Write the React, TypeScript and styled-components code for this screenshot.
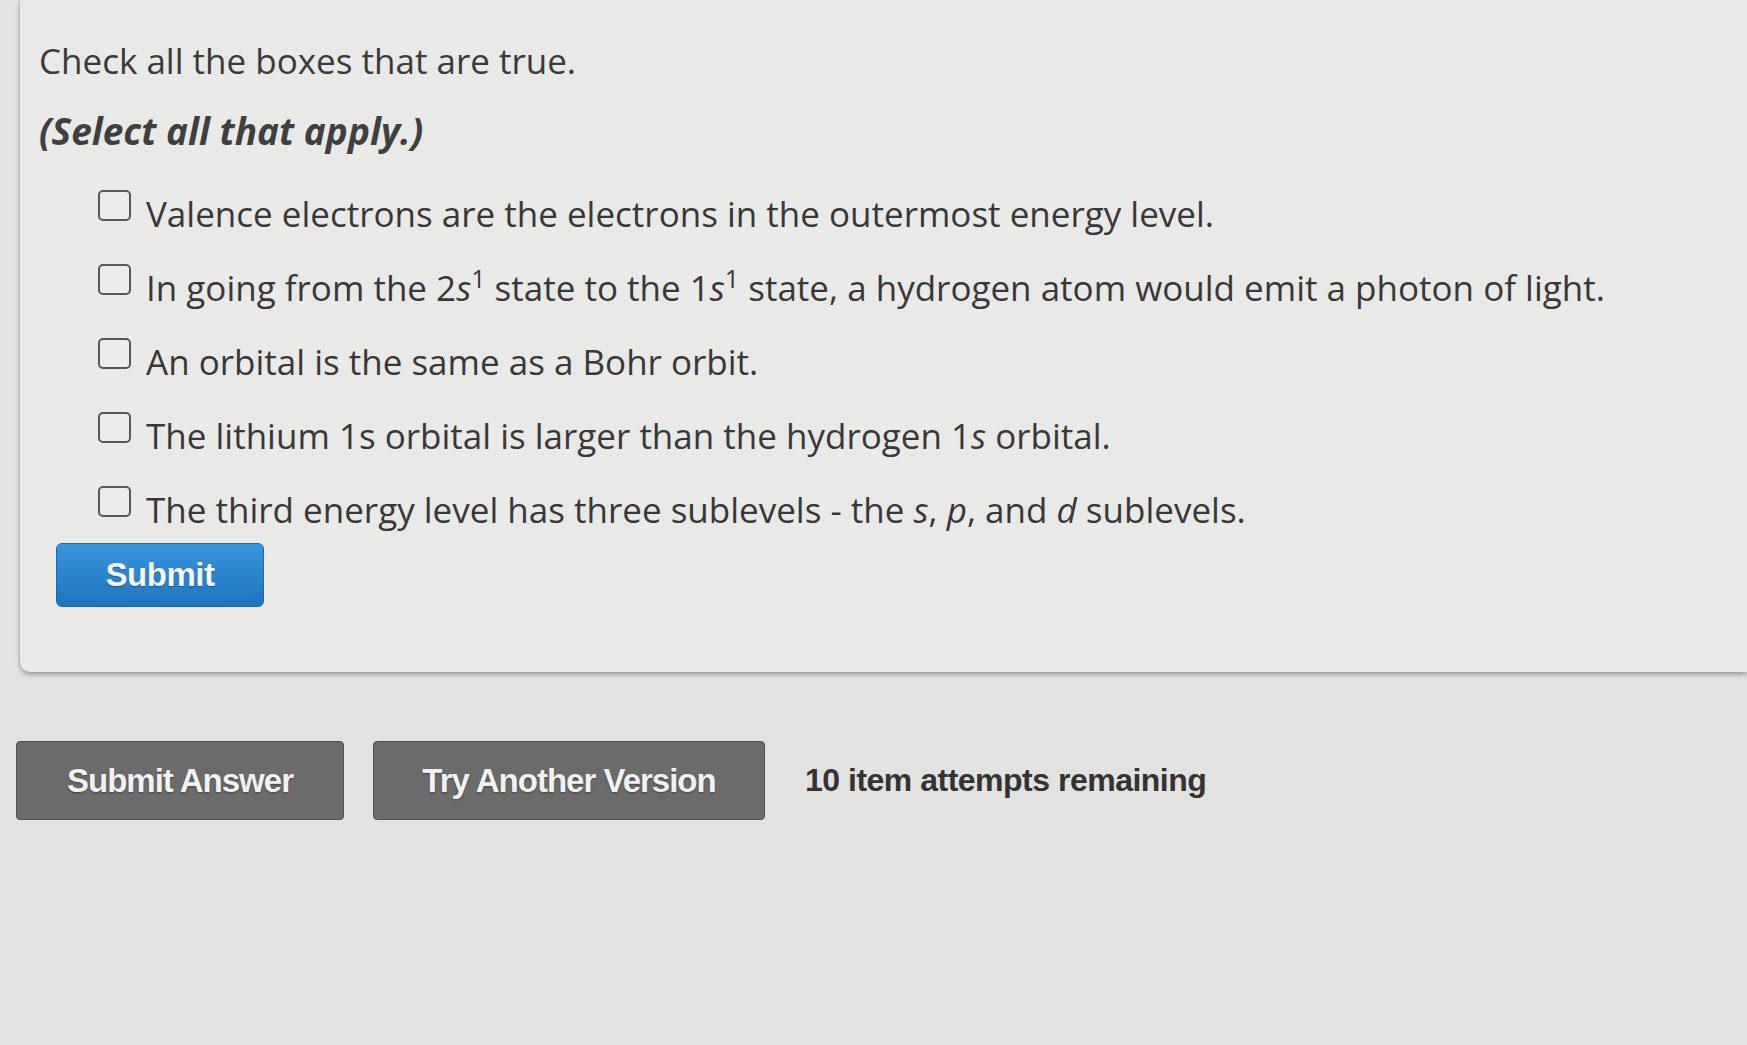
import styled, { createGlobalStyle } from 'styled-components';

const GlobalStyle = createGlobalStyle`
  html, body {
    margin: 0;
    padding: 0;
    background: #e2e2e1;
  }
  body {
    font-family: "Open Sans", "DejaVu Sans", sans-serif;
    color: #3b3b3b;
  }
`;

const Page = styled.div`
  width: 1747px;
  height: 1045px;
  overflow: hidden;
  display: flex;
  flex-direction: column;
`;

const Card = styled.section`
  margin-left: 20px;
  height: 672px;
  box-sizing: border-box;
  background: #e9e9e8;
  border-bottom-left-radius: 10px;
  box-shadow: 0 3px 4px rgba(0, 0, 0, 0.28), -1px 0 2px rgba(0, 0, 0, 0.08);
  padding: 33px 0 0 19px;
  display: flex;
  flex-direction: column;
`;

const Title = styled.h2`
  margin: 0;
  font-size: 35px;
  font-weight: 400;
  line-height: 56px;
  color: #3a3a3a;
`;

const Hint = styled.p`
  margin: 19px 0 0;
  font-size: 37px;
  font-weight: 700;
  font-style: italic;
  line-height: 46px;
  color: #3f3f3f;
`;

const Options = styled.ul`
  list-style: none;
  margin: 36px 0 0;
  padding: 0 0 0 59px;
  display: flex;
  flex-direction: column;
  gap: 26px;
`;

const Option = styled.li`
  display: flex;
  align-items: flex-start;
  gap: 15px;
  font-size: 35px;
  line-height: 48px;
  color: #383838;
`;

const Box = styled.span`
  flex: none;
  width: 33px;
  height: 31px;
  box-sizing: border-box;
  border: 2px solid #575757;
  border-radius: 5px;
  background: #ececeb;
`;

const Sup = styled.sup`
  font-size: 25px;
  line-height: 0;
  vertical-align: 13px;
`;

const SubmitButton = styled.button`
  align-self: flex-start;
  margin: 9px 0 0 17px;
  width: 208px;
  height: 64px;
  border: 1px solid #1b68ad;
  border-radius: 6px;
  background: linear-gradient(#3796dd, #1f74c0);
  color: #f4f6f8;
  font-family: "Liberation Sans", Arial, sans-serif;
  font-weight: 700;
  font-size: 33px;
  letter-spacing: -0.5px;
  text-shadow: 0 1px 1px rgba(0, 0, 0, 0.35);
`;

const Footer = styled.div`
  display: flex;
  align-items: center;
  gap: 29px;
  margin: 69px 0 0 16px;
`;

const GrayButton = styled.button<{ $w: number }>`
  width: ${(p) => p.$w}px;
  height: 79px;
  border: 1px solid #4f4f4f;
  border-radius: 4px;
  background: #6b6b6b;
  color: #f2f2f2;
  font-family: "Liberation Sans", Arial, sans-serif;
  font-weight: 700;
  font-size: 33px;
  letter-spacing: -1px;
  text-shadow: 0 1px 2px rgba(0, 0, 0, 0.4);
`;

const Attempts = styled.span`
  margin-left: 11px;
  font-family: "Liberation Sans", Arial, sans-serif;
  font-weight: 700;
  font-size: 32px;
  letter-spacing: -0.5px;
  color: #333;
`;

export default function App() {
  return (
    <>
      <GlobalStyle />
      <Page>
        <Card>
          <Title>Check all the boxes that are true.</Title>
          <Hint>(Select all that apply.)</Hint>
          <Options>
            <Option>
              <Box />
              <span>Valence electrons are the electrons in the outermost energy level.</span>
            </Option>
            <Option>
              <Box />
              <span>
                In going from the 2<i>s</i>
                <Sup>1</Sup> state to the 1<i>s</i>
                <Sup>1</Sup> state, a hydrogen atom would emit a photon of light.
              </span>
            </Option>
            <Option>
              <Box />
              <span>An orbital is the same as a Bohr orbit.</span>
            </Option>
            <Option>
              <Box />
              <span>
                The lithium 1s orbital is larger than the hydrogen 1<i>s</i> orbital.
              </span>
            </Option>
            <Option>
              <Box />
              <span>
                The third energy level has three sublevels - the <i>s</i>, <i>p</i>, and <i>d</i>{' '}
                sublevels.
              </span>
            </Option>
          </Options>
          <SubmitButton>Submit</SubmitButton>
        </Card>
        <Footer>
          <GrayButton $w={328}>Submit Answer</GrayButton>
          <GrayButton $w={392}>Try Another Version</GrayButton>
          <Attempts>10 item attempts remaining</Attempts>
        </Footer>
      </Page>
    </>
  );
}
